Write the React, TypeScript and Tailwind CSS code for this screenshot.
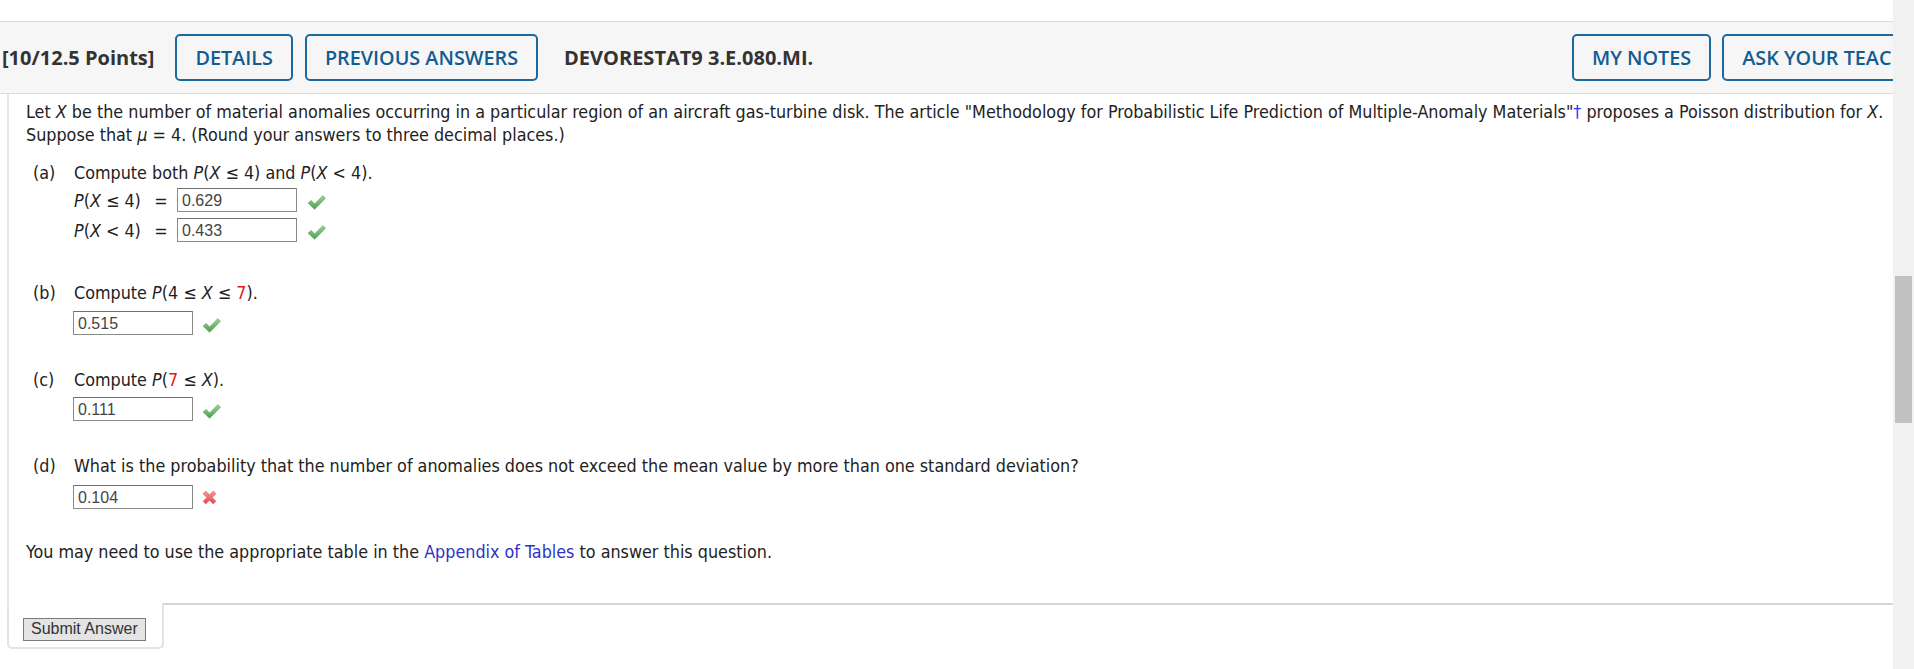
function Check() {
  return (
    <svg width="19" height="17" viewBox="0 0 18 16" className="shrink-0">
      <defs>
        <linearGradient id="ck" x1="0" y1="0" x2="0" y2="1">
          <stop offset="0" stopColor="#9ad49a" />
          <stop offset="1" stopColor="#4c9e4c" />
        </linearGradient>
      </defs>
      <path d="M1 8.5 L4 6 L7.2 9.4 L15 1.5 L17.5 4 L7.2 14.5 Z" fill="url(#ck)" stroke="#5aa55a" strokeWidth="0.6" strokeLinejoin="round" />
    </svg>
  )
}

function Cross() {
  return (
    <svg width="17" height="17" viewBox="0 0 16 16" className="shrink-0">
      <defs>
        <linearGradient id="cx" x1="0" y1="0" x2="0" y2="1">
          <stop offset="0" stopColor="#f59a9d" />
          <stop offset="1" stopColor="#e2474e" />
        </linearGradient>
      </defs>
      <path d="M2 4.5 L4.5 2 L8 5.5 L11.5 2 L14 4.5 L10.5 8 L14 11.5 L11.5 14 L8 10.5 L4.5 14 L2 11.5 L5.5 8 Z" fill="url(#cx)" stroke="#e0565c" strokeWidth="0.6" strokeLinejoin="round" />
    </svg>
  )
}

function Answer({ value }: { value: string }) {
  return (
    <div className="w-[120px] h-[24px] border border-[#8a8a8a] border-t-[#6f6f6f] bg-white pl-[4px] flex items-center font-['Liberation_Sans',Arial,sans-serif] text-[16px] text-[#444]">
      {value}
    </div>
  )
}

function HeadButton({ label }: { label: string }) {
  return (
    <div className="shrink-0 h-[47px] px-[18px] flex items-center border-2 border-[#1a69a0] rounded-[5px] text-[#125c93] text-[19.8px] font-semibold whitespace-nowrap">
      {label}
    </div>
  )
}

const Red = ({ children }: { children: React.ReactNode }) => <span className="text-[#e4161b]">{children}</span>

export default function App() {
  return (
    <div className="flex h-[669px] w-full overflow-hidden bg-white text-[#222]">
      <div className="flex-1 min-w-0 overflow-hidden pt-[21px]">
        {/* question header */}
        <div className="w-[2000px] h-[73px] border-y border-[#dcdcdc] bg-[#f6f6f6] flex items-center pl-[2px] font-['Open_Sans',sans-serif]">
          <span className="text-[20px] font-bold text-[#333] whitespace-nowrap">[10/12.5 Points]</span>
          <div className="flex items-center gap-[12px] ml-[21px]">
            <HeadButton label="DETAILS" />
            <HeadButton label="PREVIOUS ANSWERS" />
          </div>
          <span className="ml-[26px] text-[20px] font-bold text-[#333] whitespace-nowrap">DEVORESTAT9 3.E.080.MI.</span>
          <div className="flex items-center gap-[11px] ml-auto pr-[50px]">
            <HeadButton label="MY NOTES" />
            <HeadButton label="ASK YOUR TEACHER" />
          </div>
        </div>

        {/* question body */}
        <div className="w-[2000px] ml-[7px] border-l-2 border-[#e8e8e8] pl-[17px] pt-[6px] pb-[40px] font-['DejaVu_Sans_Condensed','DejaVu_Sans',sans-serif] text-[17.8px] leading-[23px]">
          <p className="whitespace-nowrap">
            Let <i>X</i> be the number of material anomalies occurring in a particular region of an aircraft gas-turbine disk. The article "Methodology for Probabilistic Life Prediction of Multiple-Anomaly Materials"<span className="text-[#1f3bff]">†</span> proposes a Poisson distribution for <i>X</i>.
            <br />
            Suppose that <i>μ</i> = 4. (Round your answers to three decimal places.)
          </p>

          <div className="mt-[15px] pl-[7px]">
            <div className="flex">
              <span className="w-[41px]">(a)</span>
              <span>Compute both <i>P</i>(<i>X</i> ≤ 4) and <i>P</i>(<i>X</i> &lt; 4).</span>
            </div>
            <div className="ml-[41px] mt-[1px]">
              <div className="h-[30px] flex items-center">
                <span className="w-[75px] whitespace-nowrap"><i>P</i>(<i>X</i> ≤ 4)</span>
                <span className="w-[24px] text-center">=</span>
                <span className="ml-[4px]"><Answer value="0.629" /></span>
                <span className="ml-[10px] mt-[4px]"><Check /></span>
              </div>
              <div className="h-[30px] flex items-center">
                <span className="w-[75px] whitespace-nowrap"><i>P</i>(<i>X</i> &lt; 4)</span>
                <span className="w-[24px] text-center">=</span>
                <span className="ml-[4px]"><Answer value="0.433" /></span>
                <span className="ml-[10px] mt-[4px]"><Check /></span>
              </div>
            </div>
          </div>

          <div className="mt-[36px] pl-[7px]">
            <div className="flex">
              <span className="w-[41px]">(b)</span>
              <span>Compute <i>P</i>(4 ≤ <i>X</i> ≤ <Red>7</Red>).</span>
            </div>
            <div className="ml-[40px] mt-[4px] h-[30px] flex items-center">
              <Answer value="0.515" />
              <span className="ml-[9px] mt-[4px]"><Check /></span>
            </div>
          </div>

          <div className="mt-[30px] pl-[7px]">
            <div className="flex">
              <span className="w-[41px]">(c)</span>
              <span>Compute <i>P</i>(<Red>7</Red> ≤ <i>X</i>).</span>
            </div>
            <div className="ml-[40px] mt-[3px] h-[30px] flex items-center">
              <Answer value="0.111" />
              <span className="ml-[9px] mt-[4px]"><Check /></span>
            </div>
          </div>

          <div className="mt-[30px] pl-[7px]">
            <div className="flex">
              <span className="w-[41px]">(d)</span>
              <span>What is the probability that the number of anomalies does not exceed the mean value by more than one standard deviation?</span>
            </div>
            <div className="ml-[40px] mt-[5px] h-[30px] flex items-center">
              <Answer value="0.104" />
              <span className="ml-[8px]"><Cross /></span>
            </div>
          </div>

          <p className="mt-[28px]">
            You may need to use the appropriate table in the <span className="text-[#2b33c4]">Appendix of Tables</span> to answer this question.
          </p>
        </div>

        {/* submit tab */}
        <div className="flex w-[2000px]">
          <div className="ml-[7px] w-[157px] h-[46px] border-l-2 border-b-2 border-r-2 border-[#e3e3e3] rounded-b-[5px] pl-[14px] pt-[13px]">
            <button className="h-[23px] px-[7px] border border-[#7a7a7a] bg-[#e4e4e4] font-['Liberation_Sans',Arial,sans-serif] text-[16px] leading-[20px] text-[#333]">
              Submit Answer
            </button>
          </div>
          <div className="flex-1 border-t-2 border-[#d4d4d4]" />
        </div>
      </div>

      {/* scrollbar */}
      <div className="w-[21px] shrink-0 bg-[#f1f1f1] pt-[276px]">
        <div className="mx-[2px] h-[147px] bg-[#c1c1c1]" />
      </div>
    </div>
  )
}
